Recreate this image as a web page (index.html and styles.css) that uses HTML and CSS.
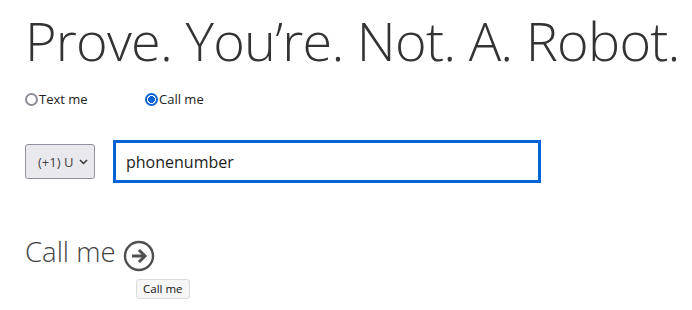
FILE: index.html
```html
<!DOCTYPE html>
<html>
<head>
<meta charset="utf-8">
<link rel="stylesheet" href="styles.css">
</head>
<body>
<div class="page">
  <h1 class="title">Prove. You’re. Not. A. Robot.</h1>
  <div class="radios">
    <label class="opt"><span class="radio"></span>Text me</label>
    <label class="opt"><span class="radio checked"></span>Call me</label>
  </div>
  <div class="phone-row">
    <div class="select"><span class="select-text">(+1) U</span><svg class="chev" width="9" height="6" viewBox="0 0 9 6"><path d="M1 1 L4.5 4.5 L8 1" fill="none" stroke="#333" stroke-width="1.5"/></svg></div>
    <div class="input">phonenumber</div>
  </div>
  <div class="action">
    <span class="action-text">Call me</span>
    <svg class="arrow" width="32" height="32" viewBox="0 0 32 32">
      <circle cx="16" cy="16" r="14" fill="none" stroke="#505050" stroke-width="2.4"/>
      <path d="M9 16 H21" stroke="#505050" stroke-width="3" fill="none"/>
      <path d="M16 10 L22 16 L16 22" stroke="#505050" stroke-width="3" fill="none" stroke-linejoin="miter"/>
    </svg>
  </div>
  <div class="hint-row"><span class="hint">Call me</span></div>
</div>
</body>
</html>
```

FILE: styles.css
```css
html, body {
  margin: 0;
  padding: 0;
  background: #fff;
}
body {
  font-family: "Open Sans", "Noto Sans", sans-serif;
  color: #333;
}
.page {
  padding: 8px 0 0 25px;
}
.title {
  margin: 0;
  font-family: "Open Sans", sans-serif;
  font-weight: 300;
  font-size: 54px;
  letter-spacing: -0.75px;
  line-height: 64px;
  color: #333;
  white-space: nowrap;
}
.radios {
  display: flex;
  margin-top: 18px;
  font-size: 13px;
  line-height: 18px;
  color: #222;
}
.opt {
  display: flex;
  align-items: center;
  width: 120px;
}
.radio {
  box-sizing: border-box;
  width: 13px;
  height: 13px;
  border-radius: 50%;
  border: 2px solid #8c8c96;
  margin-right: 1px;
  background: #fff;
}
.radio.checked {
  border-color: #0b63d6;
  background: radial-gradient(circle, #0b63d6 0 3.2px, #fff 3.6px);
}
.phone-row {
  display: flex;
  align-items: center;
  gap: 18px;
  margin-top: 32px;
}
.select {
  box-sizing: border-box;
  width: 70px;
  height: 35px;
  border: 1px solid #8f8f9d;
  border-radius: 3px;
  background: #e9e9ed;
  display: flex;
  align-items: center;
  padding-left: 12px;
  font-size: 13px;
  color: #444;
  overflow: hidden;
}
.select-text {
  width: 40px;
  overflow: hidden;
  white-space: nowrap;
}
.chev {
  margin-left: 1px;
}
.input {
  box-sizing: border-box;
  width: 428px;
  height: 43px;
  border: 3px solid #0364d8;
  display: flex;
  align-items: center;
  padding-left: 10px;
  font-size: 16px;
  color: #222;
}
.action {
  display: flex;
  align-items: flex-start;
  margin-top: 52px;
}
.action-text {
  font-size: 27.5px;
  font-weight: 300;
  color: #444;
  line-height: 34px;
}
.arrow {
  margin-left: 7px;
  margin-top: 5px;
}
.hint-row {
  display: flex;
  padding-left: 111px;
  margin-top: 7px;
}
.hint {
  box-sizing: border-box;
  height: 20px;
  padding: 0 6px;
  border: 1px solid #dcdcdc;
  border-radius: 3px;
  background: #f6f6f6;
  font-size: 11.5px;
  line-height: 18px;
  color: #111;
  white-space: nowrap;
}
```
